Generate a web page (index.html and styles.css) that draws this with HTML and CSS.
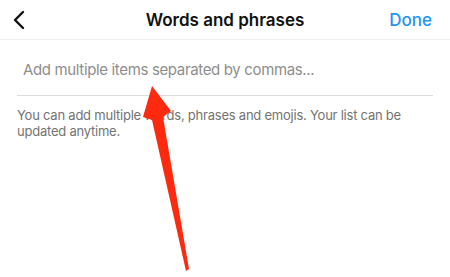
FILE: index.html
```html
<!DOCTYPE html>
<html lang="en">
<head>
  <meta charset="UTF-8">
  <meta name="viewport" content="width=device-width, initial-scale=1.0">
  <title>Words and phrases</title>
  <link rel="stylesheet" href="styles.css">
</head>
<body>
  <div class='page'>
    <div class='top'>
      <div class='back'>
        <svg width="14" height="20" viewBox="0 0 14 20"><path d="M11 2 L3 10 L11 18" fill="none" stroke="#111" stroke-width="2.4" stroke-linecap="round" stroke-linejoin="round"/></svg>
      </div>
      <div class='title'>Words and phrases</div>
      <div class='done'>Done</div>
    </div>
    <div class='box'>
      <div class='field'>Add multiple items separated by commas...</div>
      <div class='help'>You can add multiple words, phrases and emojis. Your list can be updated anytime.</div>
    </div>
    <!-- 红色箭头，盖在内容上面 -->
    <svg class='arrow' width="450" height="277" viewBox="0 0 450 277">
      <polygon points="152,86 171,111 163,117 189,269 186,271 152,120 143,117" fill="#fe2a0f"/>
    </svg>
  </div>
</body>
</html>
```

FILE: styles.css
```css
body{
  margin:0px;
  background:#fff;
  font-family:Inter, "Liberation Sans", sans-serif;
}
.page{
  width:450px;
  height:277px;
  position:relative;
  overflow:hidden;
}
.top{
  height:39px;
  border-bottom:1px solid #efefef;
  display:grid;
  grid-template-columns:90px 1fr 90px;
  align-items:center;
}
.back{
  padding-left:12px;
  display:flex;
  align-items:center;
}
.title{
  text-align:center;
  font-size:17px;
  font-weight:600;
  color:#111;
}
.done{
  text-align:right;
  padding-right:18px;
  font-size:17px;
  font-weight:500;
  color:#2196f3;
}
.box{
  padding:0 17px;
}
.field{
  height:56px;
  box-sizing:border-box;
  padding:20px 0 0 6px;
  border-bottom:1px solid #dbdbdb;
  font-size:15px;
  letter-spacing:-0.35px;
  color:#8e8e8e;
}
.help{
  margin-top:11px;
  font-size:13px;
  line-height:16px;
  letter-spacing:-0.23px;
  color:#737373;
}
.arrow{
  position:absolute;
  left:0;
  top:0;
}
```
